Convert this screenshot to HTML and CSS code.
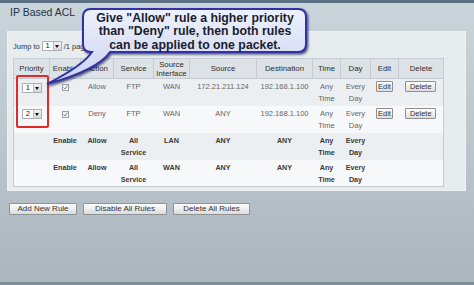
FILE: index.html
```html
<!DOCTYPE html>
<html>
<head>
<meta charset="utf-8">
<link rel="stylesheet" href="styles.css">
</head>
<body>
<div class="topbar"></div>
<div class="main">
  <h1 class="title">IP Based ACL</h1>
  <div class="panel">
    <div class="jump">
      <span>Jump to</span>
      <span class="select"><span class="val">1</span><span class="arrow"></span></span>
      <span>/1 page</span>
    </div>
    <table class="acl">
      <colgroup>
        <col class="c-pri"><col class="c-en"><col class="c-act"><col class="c-svc"><col class="c-if"><col class="c-src"><col class="c-dst"><col class="c-time"><col class="c-day"><col class="c-edit"><col class="c-del">
      </colgroup>
      <thead>
        <tr>
          <th>Priority</th><th>Enable</th><th>Action</th><th>Service</th><th>Source<br>Interface</th><th>Source</th><th>Destination</th><th>Time</th><th>Day</th><th>Edit</th><th>Delete</th>
        </tr>
      </thead>
      <tbody>
        <tr class="odd">
          <td><span class="select"><span class="val">1</span><span class="arrow"></span></span></td>
          <td><span class="check"><svg width="5" height="5" viewBox="0 0 5 5"><path d="M0.6 2.6 L2 4 L4.4 0.6" fill="none" stroke="#777" stroke-width="0.9"/></svg></span></td>
          <td>Allow</td><td>FTP</td><td>WAN</td><td>172.21.211.124</td><td>192.168.1.100</td><td>Any<br>Time</td><td>Every<br>Day</td>
          <td><button class="btn">Edit</button></td><td><button class="btn del">Delete</button></td>
        </tr>
        <tr class="even">
          <td><span class="select"><span class="val">2</span><span class="arrow"></span></span></td>
          <td><span class="check"><svg width="5" height="5" viewBox="0 0 5 5"><path d="M0.6 2.6 L2 4 L4.4 0.6" fill="none" stroke="#777" stroke-width="0.9"/></svg></span></td>
          <td>Deny</td><td>FTP</td><td>WAN</td><td>ANY</td><td>192.168.1.100</td><td>Any<br>Time</td><td>Every<br>Day</td>
          <td><button class="btn">Edit</button></td><td><button class="btn del">Delete</button></td>
        </tr>
        <tr class="odd dark">
          <td></td><td>Enable</td><td>Allow</td><td>All<br>Service</td><td>LAN</td><td>ANY</td><td>ANY</td><td>Any<br>Time</td><td>Every<br>Day</td><td></td><td></td>
        </tr>
        <tr class="even dark">
          <td></td><td>Enable</td><td>Allow</td><td>All<br>Service</td><td>WAN</td><td>ANY</td><td>ANY</td><td>Any<br>Time</td><td>Every<br>Day</td><td></td><td></td>
        </tr>
      </tbody>
    </table>
  </div>
  <div class="actions">
    <button class="abtn w-add">Add New Rule</button>
    <button class="abtn w-dis">Disable All Rules</button>
    <button class="abtn w-delall">Delete All Rules</button>
  </div>
</div>
<div class="bottombar"></div>

<div class="redbox"></div>
<svg class="callout-shape" width="272" height="85" viewBox="40 5 272 85">
  <defs>
    <linearGradient id="bfill" x1="0" y1="0" x2="0" y2="1">
      <stop offset="0" stop-color="#eef2fd"/>
      <stop offset="1" stop-color="#c9d1f0"/>
    </linearGradient>
    <filter id="sh" x="-10%" y="-10%" width="130%" height="140%">
      <feDropShadow dx="1.2" dy="1.5" stdDeviation="0.8" flood-color="#15154a" flood-opacity="0.75"/>
    </filter>
  </defs>
  <path d="M91,9 H298 Q306,9 306,17 V44 Q306,52 298,52 H110 Q97.5,70 47,84 Q82.5,66 92,52 H91 Q83,52 83,44 V17 Q83,9 91,9 Z" fill="url(#bfill)" stroke="#3232a4" stroke-width="2" filter="url(#sh)"/>
</svg>
<div class="callout-text">Give "Allow" rule a higher priority<br>than "Deny" rule, then both rules<br>can be applied to one packet.</div>
</body>
</html>
```
FILE: styles.css
```css
* { box-sizing: border-box; }
html, body { margin: 0; padding: 0; }
body {
  width: 474px;
  height: 285px;
  overflow: hidden;
  position: relative;
  display: flex;
  flex-direction: column;
  font-family: "Liberation Sans", Arial, sans-serif;
  background: linear-gradient(to bottom, #c9d4db 0%, #bcc7ce 45%, #aab5bd 100%);
}
.topbar { height: 3px; background: #5b7082; flex: none; }
.bottombar { height: 3px; background: #7e8e9b; flex: none; }
.main { flex: 1; }
.title {
  margin: 0;
  height: 28px;
  line-height: 18px;
  padding-left: 10px;
  font-size: 10.5px;
  font-weight: normal;
  color: #27323d;
}
.panel {
  margin-left: 7px;
  width: 459px;
  height: 160px;
  background: #e7ecef;
  border: 1px solid #eef2f4;
  padding: 8px 0 0 5px;
}
.jump {
  height: 12px;
  display: flex;
  align-items: center;
  gap: 2px;
  font-size: 7.5px;
  color: #333;
  margin-bottom: 6px;
}
.select {
  display: inline-flex;
  height: 10px;
  border: 1px solid #a9b0b6;
  background: #fff;
  vertical-align: middle;
}
.select .val {
  width: 10px;
  font-size: 7.5px;
  line-height: 8px;
  text-align: center;
  color: #222;
}
.select .arrow {
  width: 8px;
  background: linear-gradient(#f2f2f2, #d6d6d6);
  border-left: 1px solid #b8bec3;
  position: relative;
}
.select .arrow::after {
  content: "";
  position: absolute;
  left: 1.5px;
  top: 3px;
  border-left: 2.5px solid transparent;
  border-right: 2.5px solid transparent;
  border-top: 3px solid #111;
}
.acl {
  width: 430px;
  table-layout: fixed;
  border-collapse: collapse;
  border: 1px solid #c4ccd2;
  font-size: 7.5px;
}
.c-pri { width: 36px; } .c-en { width: 31px; } .c-act { width: 33px; } .c-svc { width: 40px; }
.c-if { width: 36px; } .c-src { width: 67px; } .c-dst { width: 56px; } .c-time { width: 28px; }
.c-day { width: 30px; } .c-edit { width: 28px; } .c-del { width: 45px; }
.acl th {
  height: 20px;
  padding: 0;
  background: #dce2e6;
  border: 1px solid #c4ccd2;
  font-weight: normal;
  font-size: 7.8px;
  line-height: 9px;
  color: #2e2e2e;
  text-align: center;
  vertical-align: middle;
}
.acl td {
  height: 27px;
  padding: 2px 0 0;
  text-align: center;
  vertical-align: top;
  line-height: 12px;
  color: #666;
  white-space: nowrap;
}
.acl tr.odd td { background: #eceff1; }
.acl tr.even td { background: #f7f8f9; }
.acl tr.dark td { color: #3a3a3a; font-weight: bold; font-size: 7.2px; }
.acl td .select { margin-top: 1px; }
.check {
  display: inline-flex;
  align-items: center;
  justify-content: center;
  width: 7px;
  height: 7px;
  margin-top: 3px;
  border: 1px solid #9a9fa4;
  background: #f4f4f4;
  vertical-align: top;
}
.check svg { display: block; }
.btn {
  height: 11px;
  margin-top: 0;
  padding: 0;
  width: 17px;
  font-family: "Liberation Sans", Arial, sans-serif;
  font-size: 7.5px;
  line-height: 9px;
  color: #333;
  background: linear-gradient(#ffffff, #dedede);
  border: 1px solid #8f8f8f;
  border-radius: 1px;
}
.btn.del { width: 31px; }
.actions {
  display: flex;
  gap: 6px;
  margin: 12px 0 0 9px;
}
.abtn {
  height: 12px;
  padding: 0;
  font-family: "Liberation Sans", Arial, sans-serif;
  font-size: 8px;
  line-height: 10px;
  color: #333;
  background: linear-gradient(#fdfdfd, #dcdcdc);
  border: 1px solid #8d9397;
  border-radius: 1px;
}
.w-add { width: 68px; }
.w-dis { width: 84px; }
.w-delall { width: 77px; }
.redbox {
  position: absolute;
  left: 16px;
  top: 75px;
  width: 33px;
  height: 53px;
  border: 2px solid #e02a2a;
  border-radius: 2px;
}
.callout-shape {
  position: absolute;
  left: 40px;
  top: 5px;
}
.callout-text {
  position: absolute;
  left: 83px;
  top: 11.5px;
  width: 224px;
  text-align: center;
  font-size: 12.3px;
  line-height: 13.5px;
  font-weight: bold;
  color: #1c1c2c;
}
```
